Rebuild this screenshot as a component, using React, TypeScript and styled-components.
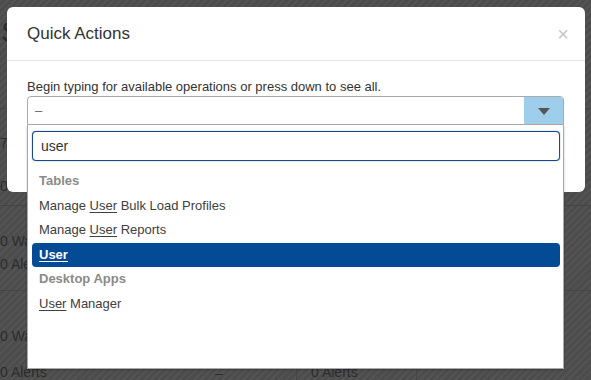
import React from 'react';
import styled, { createGlobalStyle } from 'styled-components';

const GlobalStyle = createGlobalStyle`
  body {
    margin: 0;
    font-family: "Liberation Sans", Arial, Helvetica, sans-serif;
  }
`;

interface Group {
  title: string;
  items: string[];
}

const query = 'user';
const selectedItem = 'User';

const groups: Group[] = [
  {
    title: 'Tables',
    items: ['Manage User Bulk Load Profiles', 'Manage User Reports', 'User'],
  },
  {
    title: 'Desktop Apps',
    items: ['User Manager'],
  },
];

const Page = styled.div`
  position: relative;
  width: 591px;
  height: 380px;
  overflow: hidden;
  background-color: #4e4e4e;
  background-image: repeating-linear-gradient(
    -45deg,
    rgba(255, 255, 255, 0.03) 0px,
    rgba(255, 255, 255, 0.03) 2px,
    rgba(0, 0, 0, 0.03) 2px,
    rgba(0, 0, 0, 0.03) 5px
  );
`;

/* dimmed page behind the overlay */
const Backdrop = styled.div`
  display: flex;
  flex-direction: column;
  color: #2c2c2c;
  font-size: 14px;
  line-height: 16px;
`;

const BackdropTitle = styled.div`
  font-size: 30px;
  line-height: 36px;
  padding: 14px 0 0 1px;
  height: 108px;
  box-sizing: border-box;
`;

const BackdropRow = styled.div<{ $height: number }>`
  display: grid;
  grid-template-columns: 215px 81px 120px 1fr;
  height: ${(p) => p.$height}px;
  border-top: 1px solid #454545;
  box-sizing: border-box;
`;

const BackdropCell = styled.div<{ $top: number; $gap?: number; $line?: boolean }>`
  display: flex;
  flex-direction: column;
  gap: ${(p) => p.$gap ?? 0}px;
  padding-top: ${(p) => p.$top}px;
  ${(p) => (p.$line ? 'border-left: 1px solid #454545; padding-left: 14px;' : '')}
`;

const Modal = styled.div`
  position: absolute;
  top: 7px;
  left: 7px;
  width: 578px;
  height: 185px;
  background: #fff;
  border-radius: 6px;
  display: flex;
  flex-direction: column;
`;

const Header = styled.div`
  height: 54px;
  box-sizing: border-box;
  padding: 0 16px 0 20px;
  display: flex;
  align-items: center;
  justify-content: space-between;
  border-bottom: 1px solid #e5e5e5;
`;

const Title = styled.h4`
  margin: 0;
  font-size: 17px;
  font-weight: normal;
  color: #333;
`;

const Close = styled.span`
  font-size: 20px;
  line-height: 20px;
  color: #c6c6c6;
`;

const Body = styled.div`
  padding: 18px 21px 16px 20px;
`;

const Label = styled.div`
  font-size: 13px;
  line-height: 16px;
  color: #333;
  margin-bottom: 1px;
`;

const SelectWrap = styled.div`
  position: relative;
`;

const SelectBox = styled.div`
  height: 29px;
  box-sizing: border-box;
  border: 1px solid #aaa;
  border-radius: 4px 4px 0 0;
  display: flex;
  align-items: stretch;
`;

const SelectValue = styled.div`
  flex: 1;
  display: flex;
  align-items: center;
  padding-left: 7px;
  font-size: 13px;
  color: #666;
`;

const ArrowButton = styled.div`
  width: 39px;
  background: #9fcdec;
  border-top-right-radius: 3px;
  display: flex;
  align-items: center;
  justify-content: center;
`;

const Caret = styled.span`
  width: 0;
  height: 0;
  border-left: 6px solid transparent;
  border-right: 6px solid transparent;
  border-top: 7px solid #555;
  margin-top: 1px;
`;

const Dropdown = styled.div`
  position: absolute;
  top: 100%;
  left: 0;
  right: 0;
  height: 244px;
  box-sizing: border-box;
  background: #fff;
  border: 1px solid #aaa;
  border-top: none;
  padding: 6px 3px 0 4px;
  box-shadow: 0 1px 2px rgba(0, 0, 0, 0.25);
`;

const SearchInput = styled.input`
  display: block;
  width: 100%;
  height: 30px;
  box-sizing: border-box;
  border: 1px solid #174a8c;
  box-shadow: 0 0 1px #174a8c;
  border-radius: 4px;
  padding: 0 8px;
  font-family: inherit;
  font-size: 14px;
  color: #333;
  outline: none;
`;

const List = styled.ul`
  list-style: none;
  margin: 8px 0 0;
  padding: 0;
`;

const GroupTitle = styled.li`
  padding: 4px 7px;
  line-height: 16.6px;
  font-size: 13px;
  font-weight: bold;
  color: #8a8a8a;
`;

const Option = styled.li<{ $selected: boolean }>`
  padding: 4px 7px;
  line-height: 16.6px;
  font-size: 13px;
  border-radius: 4px;
  color: ${(p) => (p.$selected ? '#fff' : '#404040')};
  background: ${(p) => (p.$selected ? '#034b95' : 'transparent')};
  font-weight: ${(p) => (p.$selected ? 'bold' : 'normal')};
`;

const Match = styled.span`
  text-decoration: underline;
  text-underline-offset: 2px;
`;

function renderLabel(text: string) {
  const i = text.toLowerCase().indexOf(query);
  if (i < 0) return text;
  return (
    <>
      {text.slice(0, i)}
      <Match>{text.slice(i, i + query.length)}</Match>
      {text.slice(i + query.length)}
    </>
  );
}

function App() {
  return (
    <Page>
      <GlobalStyle />
      <Backdrop>
        <BackdropTitle>Summary</BackdropTitle>
        <BackdropRow $height={97}>
          <BackdropCell $top={26} $gap={27}>
            <span>7,104 Records</span>
            <span>0 Errors</span>
          </BackdropCell>
        </BackdropRow>
        <BackdropRow $height={85}>
          <BackdropCell $top={27} $gap={7}>
            <span>0 Warnings</span>
            <span>0 Alerts</span>
          </BackdropCell>
        </BackdropRow>
        <BackdropRow $height={90}>
          <BackdropCell $top={37} $gap={20}>
            <span>0 Warnings</span>
            <span>0 Alerts</span>
          </BackdropCell>
          <BackdropCell $top={74}>
            <span>–</span>
          </BackdropCell>
          <BackdropCell $top={73} $line>
            <span>0 Alerts</span>
          </BackdropCell>
          <BackdropCell $top={73} $line />
        </BackdropRow>
      </Backdrop>

      <Modal>
        <Header>
          <Title>Quick Actions</Title>
          <Close>×</Close>
        </Header>
        <Body>
          <Label>Begin typing for available operations or press down to see all.</Label>
          <SelectWrap>
            <SelectBox>
              <SelectValue>–</SelectValue>
              <ArrowButton>
                <Caret />
              </ArrowButton>
            </SelectBox>
            <Dropdown>
              <SearchInput value={query} readOnly />
              <List>
                {groups.map((g) => (
                  <React.Fragment key={g.title}>
                    <GroupTitle>{g.title}</GroupTitle>
                    {g.items.map((item) => (
                      <Option key={item} $selected={item === selectedItem}>
                        {renderLabel(item)}
                      </Option>
                    ))}
                  </React.Fragment>
                ))}
              </List>
            </Dropdown>
          </SelectWrap>
        </Body>
      </Modal>
    </Page>
  );
}

export default App;
